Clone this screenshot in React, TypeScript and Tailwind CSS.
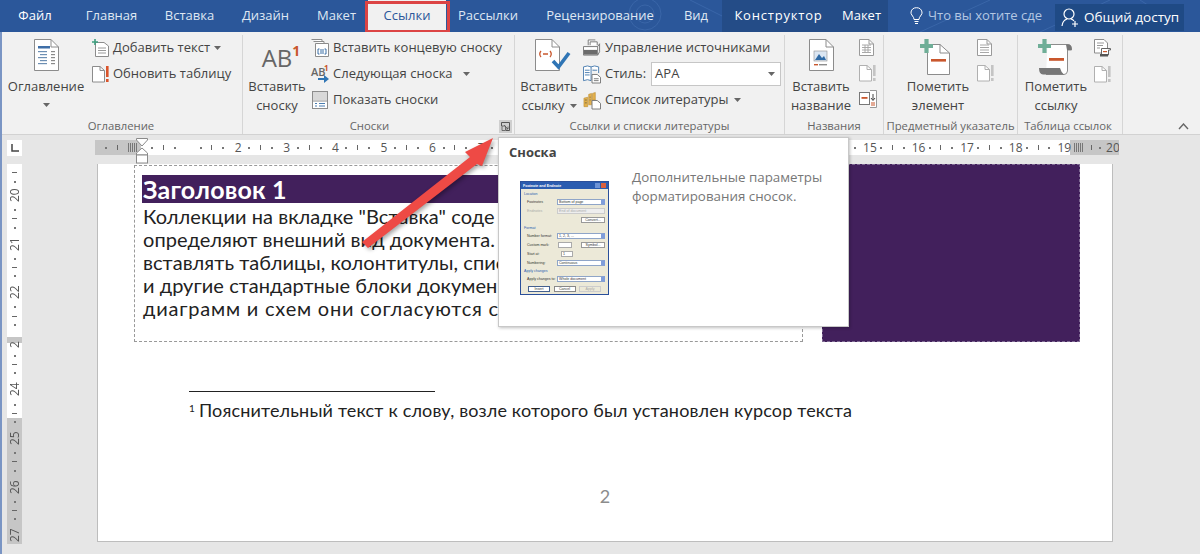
import { ReactNode } from "react";

const TABS = [
  { label: "Файл", width: "w-[70px]", className: "text-white" },
  { label: "Главная", width: "w-[83px]", className: "text-[#dfe7f3]" },
  { label: "Вставка", width: "w-[73px]", className: "text-[#dfe7f3]" },
  { label: "Дизайн", width: "w-[79px]", className: "text-[#dfe7f3]" },
  { label: "Макет", width: "w-[63px]", className: "text-[#dfe7f3]" },
];

const TABS_AFTER = [
  { label: "Рассылки", width: "w-[84px]", className: "text-[#dfe7f3]" },
  { label: "Рецензирование", width: "w-[140px]", className: "text-[#dfe7f3]" },
  { label: "Вид", width: "w-[52px]", className: "text-[#dfe7f3]" },
  { label: "Конструктор", width: "w-[113px]", className: "text-white bg-[#244c87] tracking-[0.8px]" },
  { label: "Макет", width: "w-[53px]", className: "text-white bg-[#244c87]" },
];

const SELECT = "w-[48px] h-[6px] bg-white border border-[#8fa5c8] border-r-[4px] border-r-[#7f9ddb] pl-[1px]";

function Caret({ className = "" }: { className?: string }) {
  return (
    <svg width="7" height="4" viewBox="0 0 7 4" className={className}>
      <path d="M0 0H7L3.5 4Z" fill="#666" />
    </svg>
  );
}

function Doc({ w = 16, h = 19, stroke = "#8c8c8c", children }: { w?: number; h?: number; stroke?: string; children?: ReactNode }) {
  const fold = Math.round(w * 0.3);
  return (
    <svg width={w} height={h} viewBox={`0 0 ${w} ${h}`}>
      <path d={`M.5 .5H${w - fold}L${w - 0.5} ${fold}V${h - 0.5}H.5Z`} fill="#fff" stroke={stroke} />
      <path d={`M${w - fold} .5V${fold}H${w - 0.5}`} fill="none" stroke={stroke} />
      {children}
    </svg>
  );
}

function TocIcon() {
  return (
    <Doc w={25} h={32}>
      <rect x="4" y="7" width="12" height="2.5" fill="#3f6fa8" />
      {[12, 15, 18, 21, 24].map((y, i) => (
        <g key={y}>
          <rect x={i % 2 ? 6 : 4} y={y} width={i % 2 ? 7 : 9} height="1.2" fill="#6d8fb3" />
          <rect x="17" y={y} width="4" height="1.2" fill="#8a8a8a" />
        </g>
      ))}
    </Doc>
  );
}

function AddTextIcon() {
  return (
    <svg width="17" height="18" viewBox="0 0 17 18">
      <path d="M3.5 3.5H12L16.5 7V17.5H3.5Z" fill="#fff" stroke="#8c8c8c" />
      <path d="M6 9H14M6 11.5H14M6 14H14" stroke="#9a9a9a" />
      <path d="M3 0V6M0 3H6" stroke="#3f9e7f" strokeWidth="1.6" />
    </svg>
  );
}

function UpdateIcon({ mark = "#d9542b", stroke = "#8c8c8c" }: { mark?: string; stroke?: string }) {
  return (
    <svg width="17" height="18" viewBox="0 0 17 18">
      <path d="M.5 1.5H8L12.5 5.5V17H.5Z" fill="#fff" stroke={stroke} />
      <path d="M8 1.5V5.5H12.5" fill="none" stroke={stroke} />
      <rect x="14" y="1" width="2.6" height="11" fill={mark} />
      <rect x="14" y="14" width="2.6" height="3" fill={mark} />
    </svg>
  );
}

function EndnoteIcon() {
  return (
    <svg width="18" height="18" viewBox="0 0 18 18">
      <path d="M.5 .5H11V3M2.5 2.5H13V5M4.5 4.5H17.5V17.5H4.5Z" fill="#fff" stroke="#8c8c8c" />
      <path d="M7 10V15M7 10H8.5M7 15H8.5M15 10V15M15 10H13.5M15 15H13.5" fill="none" stroke="#3b6ea5" />
      <path d="M10 10V15M12 10V15" stroke="#3b6ea5" />
    </svg>
  );
}

function NextNoteIcon() {
  return (
    <span className="relative flex w-[18px] h-[18px] items-start">
      <span className="text-[11px] leading-[14px] text-[#666] font-semibold">AB</span>
      <span className="absolute left-[13px] -top-[3px] text-[8px] font-bold text-[#c9572d]">1</span>
      <svg width="11" height="8" viewBox="0 0 11 8" className="absolute left-[7px] top-[10px]">
        <path d="M0 3H6V0L11 4L6 8V5H0Z" fill="#2f75b5" />
      </svg>
    </span>
  );
}

function ShowNotesIcon() {
  return (
    <svg width="16" height="18" viewBox="0 0 16 18">
      <rect x=".5" y=".5" width="15" height="17" fill="#fff" stroke="#8c8c8c" />
      <rect x="1" y="1" width="14" height="8" fill="#d8d8d8" />
      <path d="M1 10H15" stroke="#8c8c8c" />
      <path d="M3 12.5H5M7 12.5H13M3 15H5M7 15H13" stroke="#4a7db0" />
    </svg>
  );
}

function CiteIcon() {
  return (
    <svg width="36" height="33" viewBox="0 0 36 33">
      <path d="M.5 .5H17L24.5 8V31.5H.5Z" fill="#fff" stroke="#8c8c8c" />
      <path d="M17 .5V8H24.5" fill="none" stroke="#8c8c8c" />
      <path d="M6 12Q3.5 15 6 18M15 12Q17.5 15 15 18" fill="none" stroke="#c9572d" strokeWidth="1.3" />
      <path d="M8 15H13" stroke="#c9572d" strokeWidth="1.5" />
      <path d="M18 22L23.5 28L34 14" fill="none" stroke="#2f75b5" strokeWidth="3.6" />
    </svg>
  );
}

function SourcesIcon() {
  return (
    <svg width="19" height="18" viewBox="0 0 19 18">
      <path d="M5.5 6V.5H13M7.5 6V2.5H15V6" fill="#fff" stroke="#777" />
      <path d="M.5 7.5H15.5L17.5 4.5V13L15.5 16.5H.5Z" fill="#fff" stroke="#777" />
      <path d="M15.5 7.5V16.5" stroke="#777" />
      <rect x="1" y="11" width="14" height="5" fill="#6b6b6b" />
    </svg>
  );
}

function StyleIcon() {
  return (
    <svg width="19" height="20" viewBox="0 0 19 20">
      <path d="M.5 2.5Q5 .5 8.5 2.5V17Q5 15 .5 17ZM8.5 2.5Q12 .5 16.5 2.5V9" fill="#fff" stroke="#4a7db0" />
      <path d="M2 6H7M2 8.5H7M2 11H7M10 6H15" stroke="#4a7db0" />
      <path d="M9.5 10.5H15L18.5 13.5V19.5H9.5Z" fill="#fff" stroke="#777" />
      <path d="M11.5 15H16.5M11.5 17H16.5" stroke="#777" />
    </svg>
  );
}

function BiblioIcon() {
  return (
    <svg width="19" height="19" viewBox="0 0 19 19">
      <path d="M1 7L5 6V16H1ZM6 3L9 2V14H6ZM10 2L13 1V9H10Z" fill="#e3b04b" stroke="#b98a2e" strokeWidth=".6" />
      <path d="M2 9H4M2 12H4M7 6H8M7 9H8" stroke="#7a6a45" />
      <path d="M9.5 9.5H15L18.5 12.5V18.5H9.5Z" fill="#fff" stroke="#777" />
    </svg>
  );
}

function CaptionIcon() {
  return (
    <Doc w={25} h={32}>
      <rect x="5" y="12" width="13" height="10" fill="#dbe6f2" stroke="#8c8c8c" strokeWidth=".6" />
      <path d="M6 21L10 15L13 19L15 17L17 21Z" fill="#2f6aa5" />
      <rect x="5" y="25" width="4" height="1.4" fill="#c9572d" />
      <rect x="10" y="25" width="8" height="1.4" fill="#8c8c8c" />
    </Doc>
  );
}

function TableFigIcon() {
  return (
    <Doc w={15} h={17} stroke="#9a9a9a">
      <path d="M3 6H12M3 8.5H12M3 11H12M3 13.5H12M6 6V14M9 6V14" stroke="#a8a8a8" />
    </Doc>
  );
}

function CrossRefIcon() {
  return (
    <svg width="18" height="18" viewBox="0 0 18 18">
      <rect x=".5" y="2.5" width="10" height="12" fill="#fff" stroke="#777" />
      <rect x="2.5" y="7" width="6" height="1.8" fill="#c9572d" />
      <path d="M11 .5H17.5V17.5H11" fill="#fff" stroke="#999" />
      <path d="M14 4V10M12 8L14 10.5L16 8" fill="none" stroke="#444" />
      <path d="M12 13H16M12 15H16" stroke="#c9572d" />
    </svg>
  );
}

function MarkEntryIcon() {
  return (
    <svg width="32" height="36" viewBox="0 0 32 36">
      <path d="M7.5 5.5H20L29.5 14V35.5H7.5Z" fill="#fff" stroke="#8c8c8c" />
      <path d="M20 5.5V14H29.5" fill="none" stroke="#8c8c8c" />
      <path d="M6.5 0V14M0 7H13" stroke="#6fae97" strokeWidth="4.2" />
      <rect x="11" y="20" width="15" height="2.6" fill="#c9572d" />
    </svg>
  );
}

function LinesDocIcon() {
  return (
    <Doc w={15} h={17} stroke="#9a9a9a">
      <path d="M3 6H12M3 8.5H12M3 11H12M3 13.5H12" stroke="#a8a8a8" />
    </Doc>
  );
}

function MarkCiteIcon() {
  return (
    <svg width="35" height="36" viewBox="0 0 35 36">
      <path d="M9.5 5.5H30Q34 6 33.5 11H29.5V32Q29 35.5 26 35.5H8" fill="#fff" stroke="#8c8c8c" />
      <path d="M28 5.5H31Q34 6 33.5 11H29Z" fill="#777" />
      <path d="M1 29H22Q23 33 26 35.5H5Q1 35 1 29Z" fill="#777" />
      <path d="M6.5 0V14M0 7H13" stroke="#6fae97" strokeWidth="4.2" />
      <rect x="11" y="19" width="15" height="2.8" fill="#c9572d" />
    </svg>
  );
}

function DocScrollIcon() {
  return (
    <svg width="17" height="18" viewBox="0 0 17 18">
      <path d="M.5 .5H10L13.5 4V14H.5Z" fill="#fff" stroke="#8c8c8c" />
      <path d="M3 4H10M3 6.5H9M3 9H6" stroke="#999" />
      <path d="M7.5 9.5H16.5V11H14.5V16H7.5Z" fill="#fff" stroke="#666" />
      <rect x="6" y="15" width="8" height="2.5" fill="#555" />
      <rect x="9" y="12" width="4" height="1.2" fill="#c9572d" />
    </svg>
  );
}

function LargeButton({ icon, lines, caret, caretBelow, className }: { icon: ReactNode; lines: string[]; caret?: boolean; caretBelow?: boolean; className: string }) {
  return (
    <div className={`flex flex-col items-center shrink-0 pt-[4px] ${className}`}>
      <div className="h-[38px] flex items-start justify-center">{icon}</div>
      {lines.map((line, i) => (
        <div key={i} className="leading-[19px] whitespace-nowrap flex items-center gap-[5px]">
          {line}
          {caret && i === lines.length - 1 && <Caret />}
        </div>
      ))}
      {caretBelow && <Caret className="mt-[7px]" />}
    </div>
  );
}

function SmallRow({ icon, children }: { icon: ReactNode; children: ReactNode }) {
  return (
    <div className="h-[26px] flex items-center whitespace-nowrap">
      <div className="w-[18px] mr-[4px] flex justify-center">{icon}</div>
      {children}
    </div>
  );
}

function IconStack({ children, className }: { children: ReactNode; className: string }) {
  return <div className={`flex flex-col gap-[8px] pt-[4px] shrink-0 ${className}`}>{children}</div>;
}

function Group({ label, width, labelClass = "text-center", launcher, children }: { label: string; width: string; labelClass?: string; launcher?: boolean; children: ReactNode }) {
  return (
    <section className={`${width} shrink-0 mt-[3px] border-r border-[#d6d6d6] flex flex-col`}>
      <div className="h-[83px] flex items-start">{children}</div>
      <div className={`relative h-[16px] leading-[16px] text-[11.3px] text-[#666] whitespace-nowrap ${labelClass}`}>
        {label}
        {launcher && (
          <span className="absolute right-[2px] bottom-[1px] w-[13px] h-[13px] bg-[#cfcfcf] flex items-center justify-center">
            <svg width="9" height="9" viewBox="0 0 9 9">
              <path d="M.5 4V.5H8.5V8.5H5" fill="none" stroke="#555" />
              <path d="M1 4H4.5V8.5H1ZM3 3L7 7M7 4.5V7H4.5" fill="none" stroke="#555" strokeWidth=".8" />
            </svg>
          </span>
        )}
      </div>
    </section>
  );
}

function RulerGrid() {
  return <span className="w-[9px] h-[9px] bg-[repeating-linear-gradient(to_right,#777_0,#777_1px,transparent_1px,transparent_2px)]" />;
}

function RulerUnit({ n, grid }: { n?: number; grid?: boolean }) {
  return (
    <div className="w-[48.6px] shrink-0 flex items-center justify-between pl-[10px] text-[12px] leading-none text-[#555]">
      {grid ? <RulerGrid /> : <span className="w-[2px] h-[2px] bg-[#777]" />}
      <span className="w-[1px] h-[5px] bg-[#666]" />
      <span className="w-[2px] h-[2px] bg-[#777]" />
      <span className="w-[8px] flex justify-center -mr-[4px]">{n}</span>
    </div>
  );
}

function VRulerUnit({ label }: { label: string }) {
  return (
    <div className="h-[48.6px] shrink-0 flex flex-col items-center justify-between pb-[6px]">
      <span className="text-[12px] leading-[14px] h-[16px] text-[#555] [writing-mode:vertical-rl] rotate-180 whitespace-nowrap">{label}</span>
      <span className="w-[2px] h-[2px] bg-[#777]" />
      <span className="w-[5px] h-[1px] bg-[#666]" />
      <span className="w-[2px] h-[2px] bg-[#777]" />
    </div>
  );
}

function FootnoteDialog() {
  return (
    <div className="w-[89px] h-[114px] bg-[#ece9d8] border border-[#2a4f9a] flex flex-col text-[3.6px] leading-[4px] text-[#333] shrink-0 whitespace-nowrap font-['Liberation_Sans']">
      <div className="h-[7px] bg-[#2a5cb0] text-white flex items-center justify-between px-[2px] font-bold">
        Footnote and Endnote
        <span className="flex gap-[1px]">
          <span className="w-[5px] h-[5px] bg-[#6d93d6]" />
          <span className="w-[5px] h-[5px] bg-[#d9603f]" />
        </span>
      </div>
      <div className="flex flex-col gap-[3px] px-[3px] pt-[3px]">
        <div className="text-[#2a5cb0]">Location</div>
        <div className="flex justify-between items-center pl-[3px]">
          <span>Footnotes</span>
          <span className={SELECT}>Bottom of page</span>
        </div>
        <div className="flex justify-between items-center pl-[3px] text-[#aaa]">
          <span>Endnotes</span>
          <span className="w-[48px] h-[6px] bg-[#eee] border border-[#ccc] pl-[1px]">End of document</span>
        </div>
        <div className="flex justify-end">
          <span className="w-[24px] h-[6px] bg-white border border-[#999] text-center">Convert...</span>
        </div>
        <div className="text-[#2a5cb0]">Format</div>
        <div className="flex justify-between items-center pl-[3px]">
          <span>Number format:</span>
          <span className={SELECT}>1, 2, 3, ...</span>
        </div>
        <div className="flex justify-between items-center pl-[3px]">
          <span>Custom mark:</span>
          <span className="flex gap-[9px]">
            <span className="w-[14px] h-[6px] bg-white border border-[#aaa]" />
            <span className="w-[24px] h-[6px] bg-white border border-[#999] text-center">Symbol...</span>
          </span>
        </div>
        <div className="flex items-center pl-[3px]">
          <span className="w-[34px]">Start at:</span>
          <span className="w-[12px] h-[6px] bg-white border border-[#aaa] pl-[1px]">1</span>
        </div>
        <div className="flex justify-between items-center pl-[3px]">
          <span>Numbering:</span>
          <span className={SELECT}>Continuous</span>
        </div>
        <div className="text-[#2a5cb0]">Apply changes</div>
        <div className="flex justify-between items-center pl-[3px]">
          <span>Apply changes to:</span>
          <span className={SELECT}>Whole document</span>
        </div>
        <div className="flex justify-between items-center pt-[1px] px-[4px] text-center">
          <span className="w-[22px] h-[6px] bg-white border border-[#44608f]">Insert</span>
          <span className="w-[22px] h-[6px] bg-white border border-[#888]">Cancel</span>
          <span className="w-[22px] h-[6px] border border-[#ccc] text-[#aaa]">Apply</span>
        </div>
      </div>
    </div>
  );
}

export default function App() {
  return (
    <div className="relative w-[1200px] h-[554px] overflow-hidden bg-[#e6e6e6] font-['Open_Sans','Noto_Sans',sans-serif] text-[#444] text-[13px]">
      {/* title tabs */}
      <header className="relative h-[32px] bg-[#2b579a] flex items-stretch overflow-hidden">
        <svg width="560" height="32" viewBox="0 0 560 32" fill="none" stroke="#3a66a8" className="absolute left-[620px] top-0">
          <circle cx="25" cy="14" r="16" />
          <circle cx="25" cy="14" r="9" />
          <path d="M70 0L110 20H170M300 32L370 0M420 32L490 0M520 0L560 26" />
          <circle cx="115" cy="6" r="5" />
        </svg>
        {TABS.map((t) => (
          <div key={t.label} className={`relative ${t.width} flex items-center justify-center ${t.className}`}>{t.label}</div>
        ))}
        <div className="relative w-[78px] bg-[#f1f1f1] text-[#2b579a] flex items-center justify-center">
          Ссылки
          <span className="absolute -left-[3px] -right-[4px] top-[1px] -bottom-[1px] border-[3px] border-[#dc4444]" />
        </div>
        {TABS_AFTER.map((t) => (
          <div key={t.label} className={`relative ${t.width} flex items-center justify-center whitespace-nowrap ${t.className}`}>{t.label}</div>
        ))}
        <div className="relative flex items-center pl-[22px] w-[152px] text-[#b4c7e3] whitespace-nowrap">
          <svg width="13" height="18" viewBox="0 0 13 18" fill="none" stroke="#fff" className="mr-[5px] shrink-0">
            <path d="M4 12.5Q4 10.5 2.5 9Q.5 6.5 1 5Q2 .7 6.5 .7Q11 .7 12 5Q12.5 6.5 10.5 9Q9 10.5 9 12.5Z" />
            <path d="M4.5 14.5H8.5M5 16.5H8" />
          </svg>
          Что вы хотите сде
        </div>
        <div className="relative ml-[15px] mt-[4px] mb-[1px] w-[129px] bg-[#1f4a85] text-white text-[13.5px] flex items-center pl-[6px] gap-[4px] whitespace-nowrap">
          <svg width="19" height="20" viewBox="0 0 19 20" fill="none" stroke="#fff" strokeWidth="1.2">
            <circle cx="8" cy="6" r="5" />
            <path d="M1 18Q1.5 12.5 6 11M10 11Q12 11.5 13 13M14 13V19M11 16H17" />
          </svg>
          Общий доступ
        </div>
      </header>

      {/* ribbon */}
      <div className="h-[103px] bg-[#f1f1f1] border-b border-[#d2d2d2] flex">
        <Group label="Оглавление" width="w-[243px]">
          <LargeButton className="w-[78px] ml-[7px]" icon={<TocIcon />} lines={["Оглавление"]} caretBelow />
          <div className="ml-[6px]">
            <SmallRow icon={<AddTextIcon />}>
              Добавить текст <Caret className="ml-[4px]" />
            </SmallRow>
            <SmallRow icon={<UpdateIcon />}>Обновить таблицу</SmallRow>
          </div>
        </Group>

        <Group label="Сноски" width="w-[272px]" labelClass="text-center pr-[18px]" launcher>
          <LargeButton className="w-[60px] ml-[4px]" icon={
            <span className="relative text-[24px] leading-[38px] text-[#666]">
              AB
              <sup className="absolute -right-[8px] -top-[3px] text-[14px] leading-[30px] font-bold text-[#c9572d]">1</sup>
            </span>
          } lines={["Вставить", "сноску"]} />
          <div className="ml-[4px]">
            <SmallRow icon={<EndnoteIcon />}>Вставить концевую сноску</SmallRow>
            <SmallRow icon={<NextNoteIcon />}>
              Следующая сноска <Caret className="ml-[10px]" />
            </SmallRow>
            <SmallRow icon={<ShowNotesIcon />}>Показать сноски</SmallRow>
          </div>
        </Group>

        <Group label="Ссылки и списки литературы" width="w-[270px]">
          <LargeButton className="w-[64px] ml-[2px]" icon={<span className="pl-[7px]"><CiteIcon /></span>} lines={["Вставить", "ссылку"]} caret />
          <div className="ml-[2px]">
            <SmallRow icon={<SourcesIcon />}>Управление источниками</SmallRow>
            <SmallRow icon={<StyleIcon />}>
              Стиль:
              <span className="ml-[5px] w-[130px] h-[24px] bg-white border border-[#c6c6c6] flex items-center justify-between px-[3px]">
                APA <Caret className="mr-[2px]" />
              </span>
            </SmallRow>
            <SmallRow icon={<BiblioIcon />}>
              Список литературы <Caret className="ml-[5px]" />
            </SmallRow>
          </div>
        </Group>

        <Group label="Названия" width="w-[99px]">
          <LargeButton className="w-[64px] ml-[4px]" icon={<CaptionIcon />} lines={["Вставить", "название"]} />
          <IconStack className="ml-[6px]">
            <TableFigIcon />
            <UpdateIcon mark="#c4c4c4" stroke="#b0b0b0" />
            <CrossRefIcon />
          </IconStack>
        </Group>

        <Group label="Предметный указатель" width="w-[134px]">
          <LargeButton className="w-[70px] ml-[19px]" icon={<span className="pr-[4px]"><MarkEntryIcon /></span>} lines={["Пометить", "элемент"]} />
          <IconStack className="ml-[4px]">
            <LinesDocIcon />
            <UpdateIcon mark="#c4c4c4" stroke="#b0b0b0" />
          </IconStack>
        </Group>

        <Group label="Таблица ссылок" width="w-[105px]" labelClass="text-center pr-[4px]">
          <LargeButton className="w-[70px] ml-[3px]" icon={<span className="pr-[2px]"><MarkCiteIcon /></span>} lines={["Пометить", "ссылку"]} />
          <IconStack className="ml-[3px]">
            <DocScrollIcon />
            <UpdateIcon mark="#c4c4c4" stroke="#b0b0b0" />
          </IconStack>
        </Group>

        <div className="flex-1 flex items-end justify-end pb-[4px] pr-[11px]">
          <svg width="11" height="7" viewBox="0 0 11 7" fill="none" stroke="#666" strokeWidth="1.4">
            <path d="M1 6L5.5 1L10 6" />
          </svg>
        </div>
      </div>

      {/* horizontal ruler */}
      <div className="h-[29px] flex items-start pt-[5px]">
        <div className="ml-[7px] w-[15px] h-[16px] bg-white flex items-center justify-center">
          <svg width="8" height="8" viewBox="0 0 8 8" fill="none" stroke="#444" strokeWidth="1.5">
            <path d="M1 0V7H8" />
          </svg>
        </div>
        <div className="ml-[73px] w-[1024px] h-[15px] flex items-center overflow-hidden bg-[linear-gradient(to_right,#c6c6c6_46px,#fff_46px,#fff_975px,#c6c6c6_975px)]">
          <div className="w-[46px] shrink-0 flex items-center justify-end gap-[10px] pr-[4px]">
            <span className="w-[2px] h-[2px] bg-[#777]" />
            <span className="w-[1px] h-[5px] bg-[#666]" />
            <RulerGrid />
          </div>
          {Array.from({ length: 20 }, (_, i) => {
            const n = i + 1;
            const hidden = n === 1 || (n >= 8 && n <= 14);
            return <RulerUnit key={n} n={hidden ? undefined : n} grid={n === 20} />;
          })}
        </div>
      </div>

      {/* document canvas */}
      <div className="flex">
        <div className="ml-[7px] w-[15px] h-[380px] overflow-hidden flex flex-col items-center bg-[linear-gradient(to_bottom,#fff_173px,#c6c6c6_173px,#c6c6c6_179px,#fff_179px,#fff_254px,#c6c6c6_254px)]">
          <div className="h-[22px] shrink-0 flex flex-col items-center justify-between pt-[8px] pb-[3px]">
            <span className="w-[5px] h-[1px] bg-[#666]" />
            <span className="w-[2px] h-[2px] bg-[#777]" />
          </div>
          {["20", "21", "22", "2", "24", "25", "26", "27"].map((label) => (
            <VRulerUnit key={label} label={label} />
          ))}
        </div>

        <main className="ml-[75px] w-[1016px] h-[378px] bg-white border-x border-b border-[#bdbdbd] font-['Lato',sans-serif] text-black">
          <div className="flex pl-[36px] pt-[1px]">
            <div className="w-[669px] h-[177px] border border-dashed border-[#999] pl-[7px] pt-[9px] overflow-hidden">
              <h1 className="h-[28px] bg-[#42205c] text-white text-[25px] tracking-[0.2px] leading-[28px] font-bold pl-[1px]">Заголовок 1</h1>
              <div className="mt-[2px] pl-[1px] text-[20px] tracking-[0.05px] leading-[23px] whitespace-nowrap text-[#222]">
                <p>Коллекции на вкладке "Вставка" соде</p>
                <p>определяют внешний вид документа.</p>
                <p>вставлять таблицы, колонтитулы, спис</p>
                <p>и другие стандартные блоки докумен</p>
                <p className="tracking-[0.8px]">диаграмм и схем они согласуются с</p>
              </div>
            </div>
            <div className="ml-[19px] -mt-[1px] w-[258px] h-[178px] bg-[#42205c] border border-dashed border-[#7f6a93]" />
          </div>
          <div className="ml-[91px] mt-[49px] w-[246px] h-[1px] bg-[#222]" />
          <p className="ml-[91px] mt-[7px] text-[18px] tracking-[0.17px] leading-[22px] whitespace-nowrap text-[#222]">
            <sup className="text-[10px] mr-[4px]">1</sup>Пояснительный текст к слову, возле которого был установлен курсор текста
          </p>
          <div className="mt-[64px] text-center text-[18px] leading-[22px] text-[#8c8c8c]">2</div>
        </main>
      </div>

      {/* thin window edge */}
      <div className="absolute left-0 top-[32px] bottom-0 w-[2px] bg-[#7a95c4]" />

      {/* indent marker on the ruler */}
      <svg width="12" height="26" viewBox="0 0 12 26" className="absolute left-[136px] top-[138px]" fill="#fff" stroke="#8a8a8a">
        <path d="M.5 .5H11.5V2L6 8L.5 2ZM6 10L11.5 15V17H.5V15Z" />
        <rect x=".5" y="17" width="11" height="8" />
      </svg>

      {/* tooltip */}
      <div className="absolute left-[498px] top-[137px] w-[351px] h-[190px] bg-white border border-[#c8c8c8] shadow-[1px_1px_3px_rgba(0,0,0,0.25)] pl-[10px] pt-[5px]">
        <div className="font-bold text-[#444] text-[13px] leading-[18px]">Сноска</div>
        <div className="flex mt-[20px] ml-[11px]">
          <FootnoteDialog />
          <p className="ml-[23px] -mt-[13px] text-[13.35px] leading-[19px] text-[#777]">
            Дополнительные параметры
            <br />
            форматирования сносок.
          </p>
        </div>
      </div>

      {/* annotation arrow */}
      <svg width="150" height="120" viewBox="0 0 150 120" className="absolute left-[355px] top-[130px] drop-shadow-[2px_2px_2px_rgba(0,0,0,0.35)]">
        <polygon points="138,8 110,22 115,27 7,112 13,118 122,34 127,36" fill="#ee4a45" />
      </svg>
    </div>
  );
}
